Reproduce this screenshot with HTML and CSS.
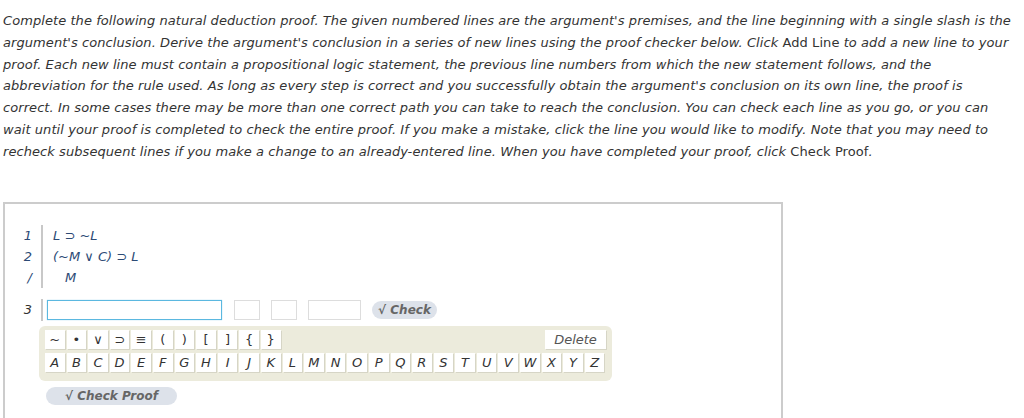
FILE: index.html
```html
<!DOCTYPE html>
<html lang="en">
<head>
    <meta charset="UTF-8">
    <title>Natural Deduction Proof</title>
    <link rel="stylesheet" href="styles.css">
</head>
<body>
    <p class="instructions">
        Complete the following natural deduction proof. The given numbered lines are the argument's premises, and the line beginning with a single slash is the argument's conclusion. Derive the argument's conclusion in a series of new lines using the proof checker below. Click <span class="plain">Add Line</span> to add a new line to your proof. Each new line must contain a propositional logic statement, the previous line numbers from which the new statement follows, and the abbreviation for the rule used. As long as every step is correct and you successfully obtain the argument's conclusion on its own line, the proof is correct. In some cases there may be more than one correct path you can take to reach the conclusion. You can check each line as you go, or you can wait until your proof is completed to check the entire proof. If you make a mistake, click the line you would like to modify. Note that you may need to recheck subsequent lines if you make a change to an already-entered line. When you have completed your proof, click <span class="plain">Check Proof</span>.
    </p>

    <div class="proof-box">
        <div class="premises">
            <div class="proof-line"><span class="num">1</span><span class="stmt">L ⊃ ~L</span></div>
            <div class="proof-line"><span class="num">2</span><span class="stmt">(~M ∨ C) ⊃ L</span></div>
            <div class="proof-line"><span class="num">/</span><span class="stmt conclusion">M</span></div>
        </div>

        <div class="proof-line entry">
            <span class="num">3</span>
            <div class="stmt">
                <input class="stmt-input" type="text">
                <input class="ref-input" type="text">
                <input class="ref-input" type="text">
                <input class="rule-input" type="text">
                <button class="pill-btn check-btn">√ Check</button>
            </div>
        </div>

        <div class="keyboard">
            <div class="key-row">
                <span class="key">~</span>
                <span class="key">•</span>
                <span class="key">∨</span>
                <span class="key">⊃</span>
                <span class="key">≡</span>
                <span class="key">(</span>
                <span class="key">)</span>
                <span class="key">[</span>
                <span class="key">]</span>
                <span class="key">{</span>
                <span class="key">}</span>
                <span class="key delete">Delete</span>
            </div>
            <div class="key-row letters" id="letters"></div>
        </div>

        <button class="pill-btn proof-btn">√ Check Proof</button>
    </div>

    <script>
        // 알파벳 키 생성
        const letters = document.getElementById('letters');
        'ABCDEFGHIJKLMNOPQRSTUVWXYZ'.split('').forEach(ch => {
            const key = document.createElement('span');
            key.className = 'key';
            key.textContent = ch;
            letters.appendChild(key);
        });
    </script>
</body>
</html>
```

FILE: styles.css
```css
body {
    margin: 0;
    font-family: "DejaVu Sans", Verdana, sans-serif;
    background: white;
    color: #333;
}
.instructions {
    margin: 0;
    padding: 10px 3px 0 3px;
    font-size: 13px;
    line-height: 21.8px;
    letter-spacing: 0.07px;
    font-style: italic;
    width: 1010px;
}
.plain {
    font-style: normal;
}
.proof-box {
    margin: 39px 0 0 3px;
    width: 776px;
    height: 240px;
    border: 2px solid #ccc;
    padding-top: 21px;
}
.proof-line {
    display: flex;
    font-size: 13px;
    font-style: italic;
    color: #2c4a75;
    line-height: 21px;
}
.num {
    width: 36px;
    padding-right: 9px;
    box-sizing: border-box;
    text-align: right;
}
.stmt {
    border-left: 2px solid #c8c8c8;
    padding-left: 10px;
}
.conclusion {
    padding-left: 22px;
}
.entry {
    margin-top: 11px;
    align-items: center;
}
.entry .num {
    color: #333;
}
.entry .stmt {
    display: flex;
    align-items: center;
    padding-left: 4px;
    height: 22px;
}
input {
    height: 20px;
    box-sizing: border-box;
    border: 1px solid #ddd;
    margin: 0 12px 0 0;
    padding: 0 3px;
    font-family: inherit;
}
.stmt-input {
    width: 175px;
    border-color: #5bb8e0;
    box-shadow: 0 0 1px #8fd0ee;
}
.ref-input {
    width: 26px;
    margin-right: 11px;
}
.rule-input {
    width: 53px;
    margin-right: 11px;
}
.pill-btn {
    background: #dde2ea;
    border: none;
    border-radius: 10px;
    color: #666;
    font-family: inherit;
    font-size: 12px;
    font-weight: bold;
    font-style: italic;
    padding: 0;
    height: 18px;
}
.check-btn {
    width: 65px;
}
.keyboard {
    margin: 5px 0 0 34px;
    width: 573px;
    height: 55px;
    box-sizing: border-box;
    background: #ecebdc;
    border-radius: 6px;
    padding: 4px 0 0 6px;
}
.key-row {
    display: flex;
    gap: 2px;
    height: 19px;
    margin-bottom: 4px;
}
.key {
    width: 19.6px;
    height: 19px;
    background: white;
    box-shadow: 1px 1px 0 #d6d5c6;
    font-size: 13px;
    line-height: 19px;
    text-align: center;
    color: #333;
}
.letters .key {
    font-style: italic;
}
.key.delete {
    width: 61px;
    margin-left: auto;
    margin-right: 6px;
    font-style: italic;
    color: #555;
}
.proof-btn {
    margin: 6px 0 0 41px;
    width: 131px;
}
```
